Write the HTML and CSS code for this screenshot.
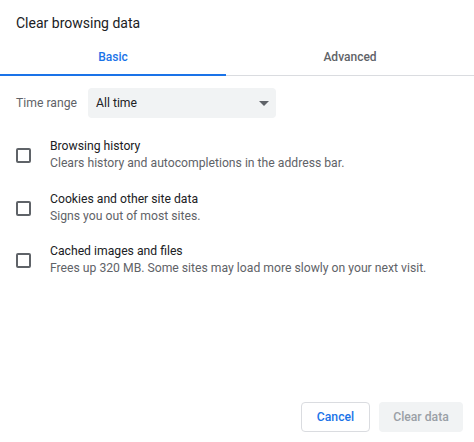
FILE: index.html
```html
<!DOCTYPE html>
<html>
<head>
<meta charset="utf-8">
<link rel="stylesheet" href="styles.css">
</head>
<body>
<div class="dialog">
  <div class="title">Clear browsing data</div>
  <div class="tabs">
    <div class="tab active">Basic</div>
    <div class="tab">Advanced</div>
  </div>
  <div class="range">
    <span class="range-label">Time range</span>
    <div class="select">
      <span>All time</span>
      <svg class="arrow" width="10" height="5" viewBox="0 0 10 5"><path d="M0 0 L10 0 L5 5 Z" fill="#5f6368"/></svg>
    </div>
  </div>
  <div class="items">
    <div class="item">
      <span class="box"></span>
      <div class="texts">
        <div class="label">Browsing history</div>
        <div class="sub">Clears history and autocompletions in the address bar.</div>
      </div>
    </div>
    <div class="item">
      <span class="box"></span>
      <div class="texts">
        <div class="label">Cookies and other site data</div>
        <div class="sub">Signs you out of most sites.</div>
      </div>
    </div>
    <div class="item">
      <span class="box"></span>
      <div class="texts">
        <div class="label">Cached images and files</div>
        <div class="sub">Frees up 320 MB. Some sites may load more slowly on your next visit.</div>
      </div>
    </div>
  </div>
  <div class="buttons">
    <button class="btn cancel">Cancel</button>
    <button class="btn clear">Clear data</button>
  </div>
</div>
</body>
</html>
```
FILE: styles.css
```css
html, body {
  margin: 0;
  padding: 0;
  background: #ffffff;
}
body {
  font-family: Roboto, "Liberation Sans", Arial, sans-serif;
  color: #202124;
}
.dialog {
  width: 474px;
  height: 442px;
  display: flex;
  flex-direction: column;
  box-sizing: border-box;
}
.title {
  font-size: 14px;
  line-height: 20px;
  padding: 13px 16px 0 16px;
  color: #202124;
}
.tabs {
  display: flex;
  margin-top: 3px;
  border-bottom: 1px solid #dadce0;
}
.tab {
  height: 39px;
  display: flex;
  align-items: center;
  justify-content: center;
  font-size: 12px;
  font-weight: 500;
  color: #5f6368;
  box-sizing: border-box;
  padding-top: 2px;
}
.tab:first-child {
  width: 226px;
}
.tab:last-child {
  flex: 1;
}
.tab.active {
  color: #1a73e8;
  border-bottom: 2px solid #1a73e8;
  margin-bottom: -1px;
  height: 40px;
  padding-top: 3px;
}
.range {
  display: flex;
  align-items: center;
  margin-top: 12px;
  padding-left: 16px;
}
.range-label {
  font-size: 12.2px;
  color: #5f6368;
  width: 72px;
}
.select {
  width: 188px;
  height: 30px;
  background: #f1f3f4;
  border-radius: 4px;
  display: flex;
  align-items: center;
  justify-content: space-between;
  padding: 0 7px 0 8px;
  box-sizing: border-box;
  font-size: 12.2px;
  color: #202124;
}
.items {
  margin-top: 20px;
  display: flex;
  flex-direction: column;
  gap: 18.5px;
}
.item {
  display: flex;
  align-items: center;
  padding-left: 16px;
}
.box {
  width: 15px;
  height: 15px;
  box-sizing: border-box;
  border: 2px solid #5f6368;
  border-radius: 2px;
  margin-right: 19px;
  flex-shrink: 0;
  margin-top: 1px;
}
.texts {
  display: flex;
  flex-direction: column;
}
.label {
  font-size: 12.2px;
  line-height: 17px;
  color: #202124;
}
.sub {
  font-size: 12.2px;
  line-height: 17px;
  color: #5f6368;
}
.buttons {
  margin-top: auto;
  display: flex;
  justify-content: flex-end;
  gap: 9px;
  padding: 0 11px 10px 0;
}
.btn {
  height: 30px;
  border-radius: 4px;
  font-family: Roboto, "Liberation Sans", Arial, sans-serif;
  font-size: 12.2px;
  font-weight: 500;
  padding: 0;
  box-sizing: border-box;
}
.cancel {
  width: 69px;
  background: #ffffff;
  border: 1px solid #dadce0;
  color: #1a73e8;
}
.clear {
  width: 84px;
  background: #f1f3f4;
  border: none;
  color: #9aa0a6;
}
```
